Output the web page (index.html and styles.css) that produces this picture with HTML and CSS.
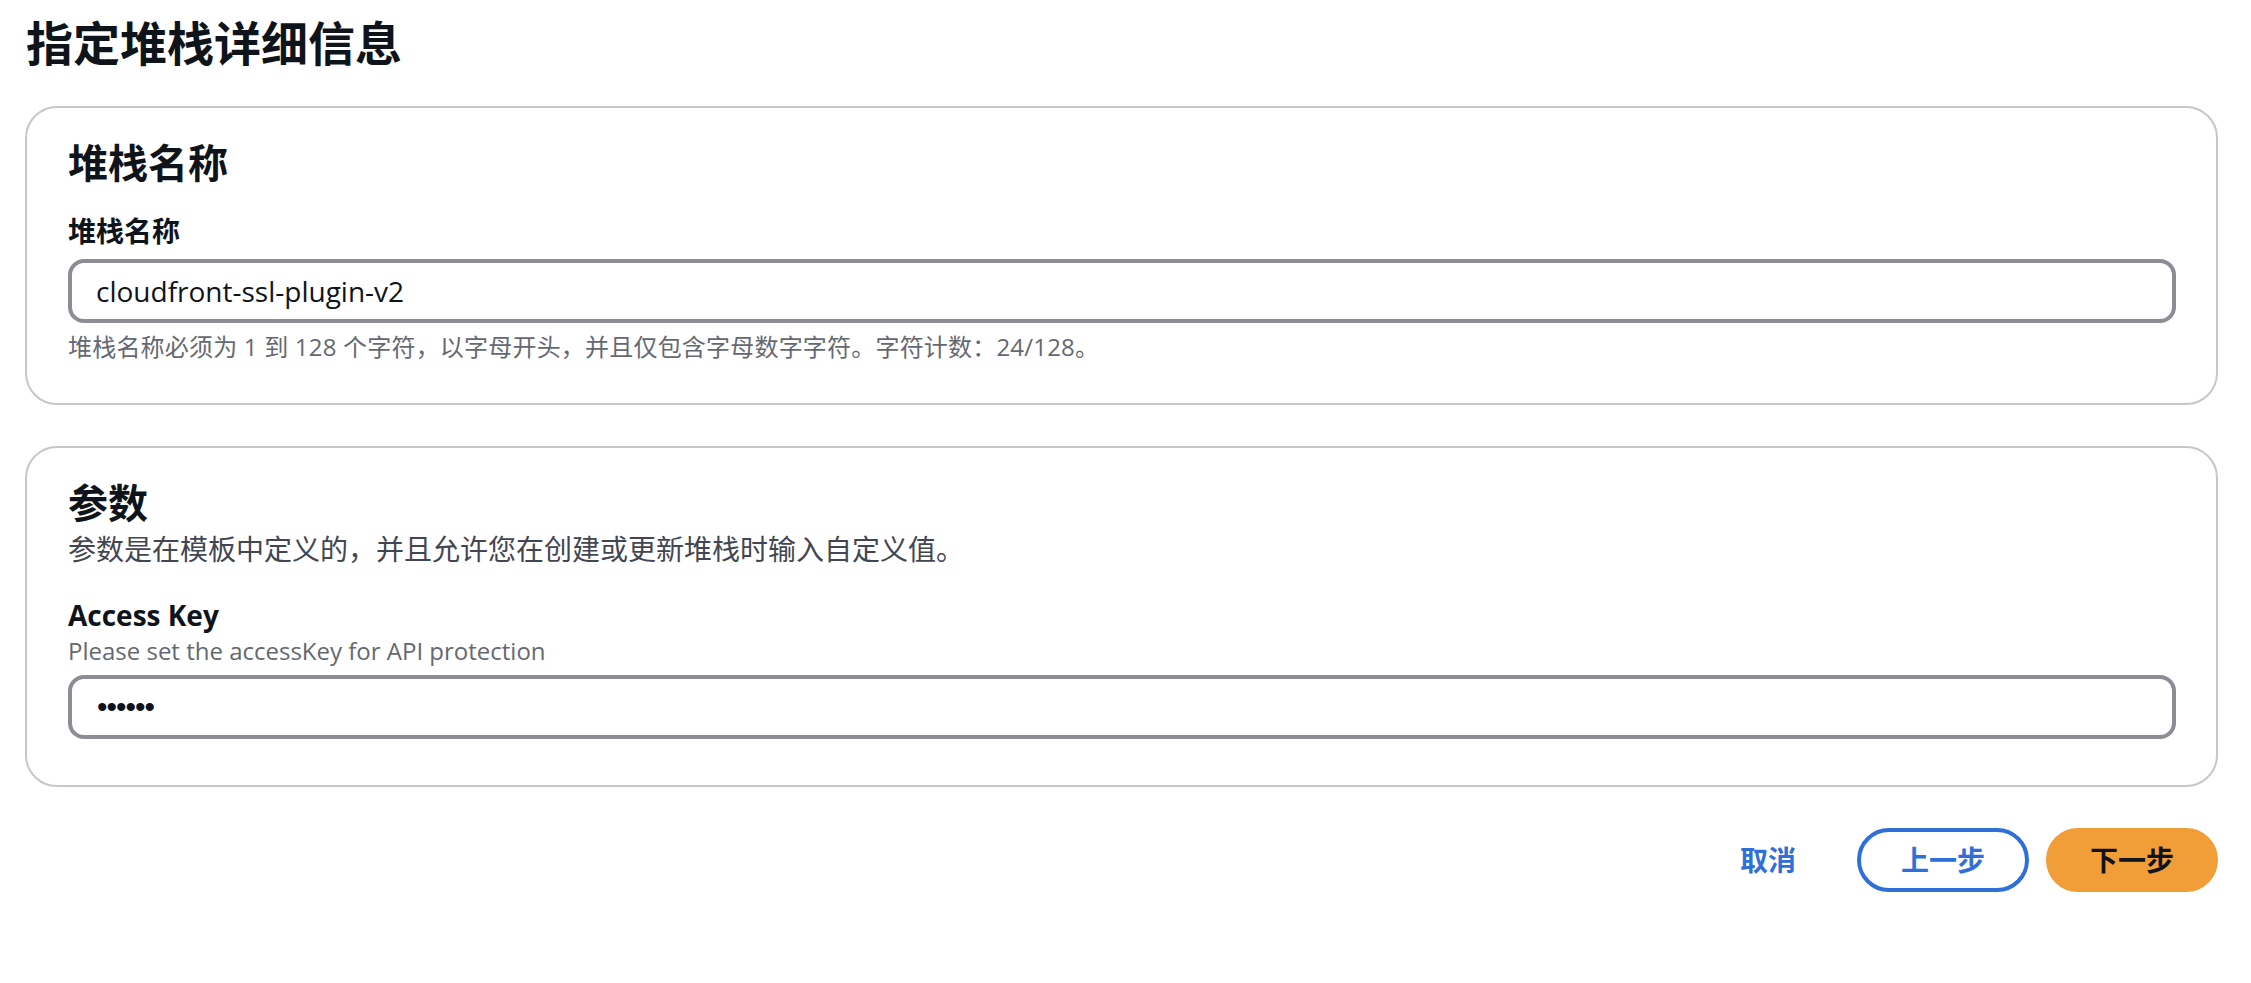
FILE: index.html
```html
<!DOCTYPE html>
<html lang="zh-CN">
<head>
<meta charset="utf-8">
<title>指定堆栈详细信息</title>
<link rel="stylesheet" href="styles.css">
</head>
<body>
<main class="page">
  <h1 class="page-title">指定堆栈详细信息</h1>

  <section class="card">
    <h2 class="card-title">堆栈名称</h2>
    <div class="field">
      <label class="field-label" for="stack-name">堆栈名称</label>
      <input class="text-input" id="stack-name" type="text" value="cloudfront-ssl-plugin-v2">
      <p class="field-hint">堆栈名称必须为 1 到 128 个字符，以字母开头，并且仅包含字母数字字符。字符计数：24/128。</p>
    </div>
  </section>

  <section class="card">
    <h2 class="card-title">参数</h2>
    <p class="card-desc">参数是在模板中定义的，并且允许您在创建或更新堆栈时输入自定义值。</p>
    <div class="field field-last">
      <label class="field-label label-tight" for="access-key">Access Key</label>
      <p class="field-desc">Please set the accessKey for API protection</p>
      <input class="text-input password-input" id="access-key" type="password" value="abcdef">
    </div>
  </section>

  <div class="actions">
    <button class="btn btn-link" type="button">取消</button>
    <button class="btn btn-normal" type="button">上一步</button>
    <button class="btn btn-primary" type="button">下一步</button>
  </div>
</main>
</body>
</html>
```

FILE: styles.css
```css
* {
  box-sizing: border-box;
}

html, body {
  margin: 0;
  padding: 0;
  background: #ffffff;
}

body {
  font-family: "Open Sans", "Noto Sans CJK SC", sans-serif;
  color: #0f141a;
}

.page {
  padding: 13px 33px 40px 25px;
}

.page-title {
  margin: 0 0 33px 1px;
  font-size: 47px;
  line-height: 60px;
  font-weight: 700;
  color: #0f141a;
}

.card {
  border: 2px solid #c6c6cd;
  border-radius: 32px;
  padding: 31px 40px 40px 41px;
  margin-bottom: 41px;
  background: #ffffff;
}

.card-title {
  margin: 0;
  font-size: 40px;
  line-height: 48px;
  font-weight: 700;
  color: #0f141a;
}

.card-desc {
  margin: 0;
  font-size: 28px;
  line-height: 44px;
  color: #424650;
}

.field {
  display: flex;
  flex-direction: column;
  margin-top: 24px;
}

.field-last {
  margin-bottom: 6px;
}

.field-label {
  font-size: 28px;
  line-height: 40px;
  font-weight: 700;
  color: #0f141a;
  margin-bottom: 8px;
}

.label-tight {
  margin-bottom: 0;
}

.field-desc {
  margin: 0 0 8px 0;
  font-size: 24px;
  line-height: 32px;
  color: #656871;
}

.field-hint {
  margin: 8px 0 0 0;
  font-size: 24px;
  line-height: 32px;
  color: #656871;
  letter-spacing: 0.2px;
}

.text-input {
  width: 100%;
  height: 64px;
  border: 4px solid #8c8c94;
  border-radius: 16px;
  padding: 0 24px;
  font-family: "Open Sans", "Noto Sans CJK SC", sans-serif;
  font-size: 28px;
  color: #0f141a;
  background: #ffffff;
  outline: none;
}

.password-input {
  font-family: "Liberation Sans", sans-serif;
  font-size: 30px;
  letter-spacing: -1px;
  padding-left: 25px;
}

.actions {
  display: flex;
  justify-content: flex-end;
  align-items: center;
  gap: 17px;
}

.btn {
  height: 64px;
  padding: 0 40px;
  border-radius: 32px;
  font-family: "Open Sans", "Noto Sans CJK SC", sans-serif;
  font-size: 28px;
  font-weight: 700;
  line-height: 56px;
  cursor: pointer;
}

.btn-link {
  border: 4px solid transparent;
  background: transparent;
  color: #2f6fd9;
}

.btn-normal {
  border: 4px solid #2f6fd9;
  background: #ffffff;
  color: #2f6fd9;
}

.btn-primary {
  border: 4px solid #f29e38;
  background: #f29e38;
  color: #0f141a;
}
```
